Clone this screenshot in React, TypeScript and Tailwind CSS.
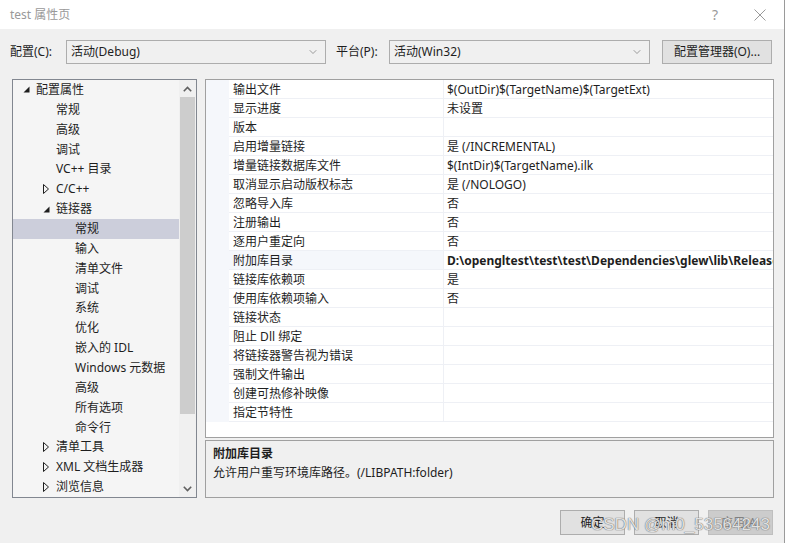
import { ChevronDown } from "lucide-react";

type TreeItem = { label: string; level: number; arrow?: "open" | "closed"; selected?: boolean };

const tree: TreeItem[] = [
  { label: "配置属性", level: 0, arrow: "open" },
  { label: "常规", level: 1 },
  { label: "高级", level: 1 },
  { label: "调试", level: 1 },
  { label: "VC++ 目录", level: 1 },
  { label: "C/C++", level: 1, arrow: "closed" },
  { label: "链接器", level: 1, arrow: "open" },
  { label: "常规", level: 2, selected: true },
  { label: "输入", level: 2 },
  { label: "清单文件", level: 2 },
  { label: "调试", level: 2 },
  { label: "系统", level: 2 },
  { label: "优化", level: 2 },
  { label: "嵌入的 IDL", level: 2 },
  { label: "Windows 元数据", level: 2 },
  { label: "高级", level: 2 },
  { label: "所有选项", level: 2 },
  { label: "命令行", level: 2 },
  { label: "清单工具", level: 1, arrow: "closed" },
  { label: "XML 文档生成器", level: 1, arrow: "closed" },
  { label: "浏览信息", level: 1, arrow: "closed" },
];

const props: [string, string, boolean?][] = [
  ["输出文件", "$(OutDir)$(TargetName)$(TargetExt)"],
  ["显示进度", "未设置"],
  ["版本", ""],
  ["启用增量链接", "是 (/INCREMENTAL)"],
  ["增量链接数据库文件", "$(IntDir)$(TargetName).ilk"],
  ["取消显示启动版权标志", "是 (/NOLOGO)"],
  ["忽略导入库", "否"],
  ["注册输出", "否"],
  ["逐用户重定向", "否"],
  ["附加库目录", "D:\\opengltest\\test\\test\\Dependencies\\glew\\lib\\Release\\Win32", true],
  ["链接库依赖项", "是"],
  ["使用库依赖项输入", "否"],
  ["链接状态", ""],
  ["阻止 Dll 绑定", ""],
  ["将链接器警告视为错误", ""],
  ["强制文件输出", ""],
  ["创建可热修补映像", ""],
  ["指定节特性", ""],
];

const levelPad = ["pl-[10px]", "pl-[30px]", "pl-[49px]"];

function Arrow({ kind }: { kind?: "open" | "closed" }) {
  if (!kind) return <span className="w-[13px] shrink-0" />;
  return (
    <span className="w-[13px] shrink-0 flex items-center">
      {kind === "open" ? (
        <svg width="7" height="7" viewBox="0 0 7 7">
          <path d="M6.5 0.5 L6.5 6.5 L0.5 6.5 Z" fill="#1e1e1e" />
        </svg>
      ) : (
        <svg width="6" height="10" viewBox="0 0 6 10">
          <path d="M0.5 0.5 L5.5 5 L0.5 9.5 Z" fill="none" stroke="#1e1e1e" strokeWidth="1" />
        </svg>
      )}
    </span>
  );
}

function Select({ value, width }: { value: string; width: string }) {
  return (
    <div className={`${width} h-[24px] bg-[#f0f0f0] border border-[#adadad] flex items-center justify-between pl-[4px] pr-[6px]`}>
      <span>{value}</span>
      <ChevronDown size={12} strokeWidth={1.2} className="text-[#606060]" />
    </div>
  );
}

export default function App() {
  return (
    <div
      className="w-[785px] h-[543px] bg-[#f0f0f0] relative overflow-hidden text-[12px] text-[#1e1e1e] border-r border-[#9a9a9a]"
      style={{ fontFamily: '"Noto Sans", "Noto Sans CJK SC", sans-serif' }}
    >
      {/* title bar */}
      <div className="h-[29px] bg-white flex items-center pl-[10px] pr-[18px] text-[#999999]">
        <span className="flex-1">test 属性页</span>
        <span className="text-[14px] mr-[36px]">?</span>
        <svg width="12" height="12" viewBox="0 0 12 12">
          <path d="M0.5 0.5 L11.5 11.5 M11.5 0.5 L0.5 11.5" stroke="#999" strokeWidth="1" />
        </svg>
      </div>

      {/* config row */}
      <div className="flex items-center mt-[11px] pl-[10px] h-[24px]">
        <span className="w-[56px]">配置(C):</span>
        <Select value="活动(Debug)" width="w-[260px]" />
        <span className="ml-[10px] w-[53px]">平台(P):</span>
        <Select value="活动(Win32)" width="w-[261px]" />
        <div className="ml-[12px] w-[110px] h-[24px] bg-[#e1e1e1] border border-[#adadad] flex items-center justify-center">
          配置管理器(O)...
        </div>
      </div>

      {/* main area */}
      <div className="flex mt-[15px] pl-[12px]">
        {/* tree */}
        <div className="w-[185px] h-[419px] border border-[#828790] bg-[#f5f5f5] flex">
          <div className="flex-1 flex flex-col">
            {tree.map((t, i) => (
              <div
                key={i}
                className={`h-[20px] flex items-center ${levelPad[t.level]} ${t.selected ? "bg-[#cccedb]" : ""}`}
              >
                <Arrow kind={t.arrow} />
                <span className="whitespace-nowrap">{t.label}</span>
              </div>
            ))}
          </div>
          <div className="w-[17px] bg-[#f0f0f0] flex flex-col items-center">
            <div className="h-[17px] flex items-center justify-center">
              <svg width="9" height="6" viewBox="0 0 9 6">
                <path d="M0.8 5.2 L4.5 1.5 L8.2 5.2" fill="none" stroke="#606060" strokeWidth="1.6" />
              </svg>
            </div>
            <div className="w-[15px] h-[317px] bg-[#cdcdcd]" />
            <div className="flex-1" />
            <div className="h-[17px] flex items-center justify-center">
              <svg width="9" height="6" viewBox="0 0 9 6">
                <path d="M0.8 0.8 L4.5 4.5 L8.2 0.8" fill="none" stroke="#606060" strokeWidth="1.6" />
              </svg>
            </div>
          </div>
        </div>

        {/* right side */}
        <div className="ml-[8px] w-[569px] flex flex-col">
          <div className="h-[359px] border border-[#a0a0a0] bg-white overflow-hidden">
            {props.map(([name, value, bold], i) => (
              <div key={i} className="h-[19px] flex">
                <div className="w-[23px] bg-[#f5f7fb] shrink-0" />
                <div
                  className={`w-[215px] shrink-0 border-b border-r border-[#eef0f5] pl-[4px] pt-[2px] flex items-center whitespace-nowrap ${bold ? "bg-[#f5f7fb]" : ""}`}
                >
                  {name}
                </div>
                <div
                  className={`flex-1 border-b border-[#eef0f5] pl-[3px] pt-[2px] flex items-center whitespace-nowrap overflow-hidden ${bold ? "font-bold" : ""}`}
                >
                  {value}
                </div>
              </div>
            ))}
          </div>
          <div className="mt-[2px] h-[58px] border border-[#a0a0a0] bg-[#f0f0f0] px-[7px] pt-[3px] leading-[19px]">
            <div className="font-bold">附加库目录</div>
            <div>允许用户重写环境库路径。(/LIBPATH:folder)</div>
          </div>
        </div>
      </div>

      {/* buttons */}
      <div className="flex justify-end gap-[9px] pr-[11px] mt-[12px]">
        <div className="w-[65px] h-[25px] bg-[#e1e1e1] border border-[#adadad] flex items-center justify-center">确定</div>
        <div className="w-[65px] h-[25px] bg-[#e1e1e1] border border-[#adadad] flex items-center justify-center">取消</div>
        <div className="w-[65px] h-[25px] bg-[#cccccc] border border-[#bfbfbf] flex items-center justify-center text-[#838383]">应用(A)</div>
      </div>

      {/* watermark */}
      <div
        className="absolute left-[591px] top-[512px] text-[17px] text-white/80 [text-shadow:0_0_1px_#666,0_0_1px_#666] pointer-events-none whitespace-nowrap"
        style={{ fontFamily: '"Liberation Sans", sans-serif' }}
      >
        CSDN @m0_53564243
      </div>
    </div>
  );
}
